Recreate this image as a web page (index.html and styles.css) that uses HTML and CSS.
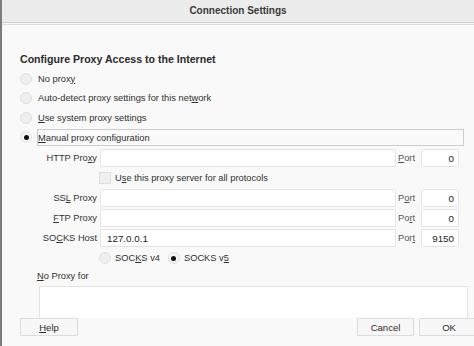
FILE: index.html
```html
<!DOCTYPE html>
<html lang="en">
<head>
    <meta charset="UTF-8">
    <meta name="viewport" content="width=device-width, initial-scale=1.0">
    <title>Connection Settings</title>

    <link rel="stylesheet" href="styles.css">
</head>
<body>
    <div class="window">
        <div class="titlebar">Connection Settings</div>

        <div class="content">
            <h1 class="heading">Configure Proxy Access to the Internet</h1>

            <div class="radio-row"><span class="radio"></span>No prox<u>y</u></div>
            <div class="radio-row"><span class="radio"></span>Auto-detect proxy settings for this net<u>w</u>ork</div>
            <div class="radio-row"><span class="radio"></span><u>U</u>se system proxy settings</div>
            <div class="radio-row"><span class="radio checked"></span><span class="focus-box"><u>M</u>anual proxy configuration</span></div>

            <div class="proxy-grid">
                <label class="field-label">HTTP Pro<u>x</u>y</label>
                <div class="input"></div>
                <label class="port-label"><u>P</u>ort</label>
                <div class="input port">0</div>

                <div class="check-row"><span class="checkbox"></span>U<u>s</u>e this proxy server for all protocols</div>

                <label class="field-label">SS<u>L</u> Proxy</label>
                <div class="input"></div>
                <label class="port-label">P<u>o</u>rt</label>
                <div class="input port">0</div>

                <label class="field-label"><u>F</u>TP Proxy</label>
                <div class="input"></div>
                <label class="port-label">Po<u>r</u>t</label>
                <div class="input port">0</div>

                <label class="field-label">SO<u>C</u>KS Host</label>
                <div class="input host">127.0.0.1</div>
                <label class="port-label">Por<u>t</u></label>
                <div class="input port">9150</div>

                <div class="socks-row">
                    <span class="radio small"></span><span class="socks-label">SOC<u>K</u>S v4</span>
                    <span class="radio small checked"></span><span class="socks-label">SOCKS v<u>5</u></span>
                </div>
            </div>

            <div class="no-proxy-label"><u>N</u>o Proxy for</div>
            <div class="textarea"></div>
        </div>

        <div class="buttons">
            <button class="btn help"><u>H</u>elp</button>
            <div class="spacer"></div>
            <button class="btn cancel">Cancel</button>
            <button class="btn ok">OK</button>
        </div>
    </div>
</body>
</html>
```

FILE: styles.css
```css
body {
    margin: 0;
    width: 474px;
    height: 346px;
    overflow: hidden;
    background-color: #f9f9f9;
    font-family: "Liberation Sans", Arial, sans-serif;
    font-size: 9.3px;
    color: #2f2f2f;
}

u {
    text-decoration-thickness: 1px;
    text-underline-offset: 1px;
}

.window {
    height: 346px;
    border-left: 2px solid #7d7d7d;
    background-color: #f9f9f9;
}

.titlebar {
    height: 22px;
    line-height: 22px;
    text-align: center;
    font-size: 10px;
    font-weight: bold;
    color: #3a3a3a;
    background-color: #ececec;
    border-bottom: 1px solid #d2d2d2;
    box-shadow: 0 1px 0 #f6f6f6, 0 2px 0 #dedede;
}

.content {
    padding-left: 18px;
}

.heading {
    margin: 0;
    padding-top: 30px;
    height: 13px;
    line-height: 13px;
    font-size: 10.6px;
    font-weight: bold;
    color: #2a2a2a;
}

.radio-row {
    display: flex;
    align-items: center;
    height: 19.5px;
}

.heading + .radio-row {
    margin-top: 3px;
}

.radio {
    width: 10px;
    height: 10px;
    border: 1px solid #dedede;
    border-radius: 50%;
    background-color: #efefef;
    margin-right: 6px;
    position: relative;
    flex-shrink: 0;
}

.radio.checked {
    background-color: #f4f4f4;
    border-color: #e4e4e4;
}

.radio.checked::after {
    content: "";
    position: absolute;
    left: 2.5px;
    top: 2.5px;
    width: 5px;
    height: 5px;
    border-radius: 50%;
    background-color: #111;
}

.focus-box {
    flex: 1;
    margin-left: -1px;
    margin-right: 10px;
    height: 17px;
    line-height: 17px;
    border: 1px solid #cdcdcd;
    box-sizing: border-box;
}

.proxy-grid {
    display: grid;
    grid-template-columns: 61px 296px 21px 38px;
    grid-template-rows: repeat(6, 18px);
    column-gap: 2px;
    row-gap: 2px;
    margin-left: 17px;
    margin-top: 2px;
    align-items: center;
}

.field-label {
    text-align: right;
    padding-right: 1px;
    color: #333;
}

.port-label {
    color: #555;
}

.input {
    height: 18px;
    line-height: 18px;
    box-sizing: border-box;
    background-color: #fff;
    border: 1px solid #e4e4e4;
    border-radius: 1px;
    padding: 0 6px;
    color: #222;
    font-size: 9.8px;
}

.input.port {
    text-align: right;
    padding-right: 4px;
}

.check-row {
    grid-column: 2 / 5;
    display: flex;
    align-items: center;
    margin-left: -1px;
}

.checkbox {
    width: 10px;
    height: 10px;
    border: 1px solid #dedede;
    background-color: #efefef;
    margin-right: 4px;
}

.socks-row {
    grid-column: 2 / 5;
    display: flex;
    align-items: center;
    margin-left: -1px;
}

.radio.small {
    margin-right: 4px;
}

.socks-label {
    margin-right: 8px;
}

.no-proxy-label {
    margin-top: 0;
    margin-left: 17px;
    height: 18px;
    line-height: 18px;
}

.textarea {
    margin-left: 19px;
    margin-right: 6px;
    margin-top: 1px;
    height: 32px;
    background-color: #fff;
    border: 1px solid #e4e4e4;
    border-bottom: none;
    box-sizing: border-box;
}

.buttons {
    display: flex;
    padding-left: 18px;
    margin-top: 0;
    gap: 5px;
    margin-right: -5px;
}

.spacer {
    flex: 1;
}

.btn {
    height: 18px;
    font-family: "Liberation Sans", Arial, sans-serif;
    font-size: 9.5px;
    color: #2a2a2a;
    background-color: #f7f7f7;
    border: 1px solid #dcdcdc;
    border-radius: 1px;
    padding: 0;
}

.help {
    width: 58px;
}

.cancel {
    width: 57px;
}

.ok {
    width: 60px;
}
```
